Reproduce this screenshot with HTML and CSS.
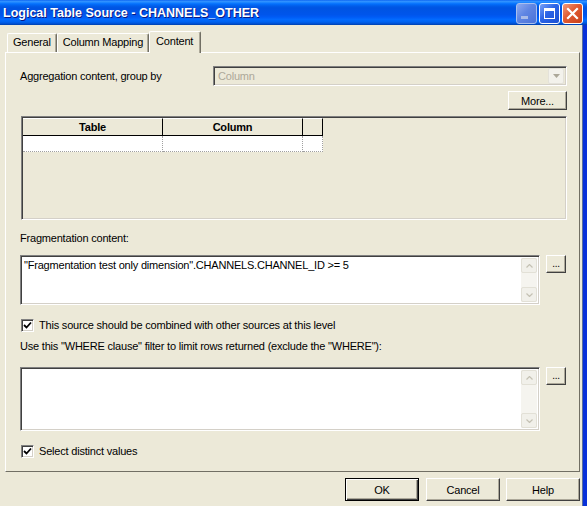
FILE: index.html
```html
<!DOCTYPE html>
<html lang="en">
<head>
    <meta charset="UTF-8">
    <meta name="viewport" content="width=device-width, initial-scale=1.0">
    <title>Logical Table Source - CHANNELS_OTHER</title>
    <link rel="stylesheet" href="styles.css">
</head>
<body>
    <div class="window">
        <div class="titlebar">
            <span class="title">Logical Table Source - CHANNELS_OTHER</span>
            <div class="caption-buttons">
                <span class="cap cap-min">
                    <svg width="19" height="19" viewBox="0 0 19 19"><rect x="4" y="12" width="7" height="3" fill="#a9bbe8"/></svg>
                </span>
                <span class="cap cap-max">
                    <svg width="19" height="19" viewBox="0 0 19 19"><rect x="4.5" y="4.5" width="10" height="10" fill="none" stroke="#fff" stroke-width="1"/><rect x="4" y="4" width="11" height="3" fill="#fff"/></svg>
                </span>
                <span class="cap cap-close">
                    <svg width="19" height="19" viewBox="0 0 19 19"><path d="M5 5 L14 14 M14 5 L5 14" stroke="#fff" stroke-width="2.2" stroke-linecap="square"/></svg>
                </span>
            </div>
        </div>
        <div class="client">
            <div class="tabs">
                <div class="tab">General</div>
                <div class="tab">Column Mapping</div>
                <div class="tab active">Content</div>
            </div>
            <div class="panel">
                <div class="agg-row">
                    <label class="agg-label">Aggregation content, group by</label>
                    <div class="combo">
                        <span class="combo-text">Column</span>
                        <span class="combo-arrow">
                            <svg width="9" height="5" viewBox="0 0 9 5"><path d="M1 0 L8 0 L4.5 4 Z" fill="#aca899"/></svg>
                        </span>
                    </div>
                </div>
                <div class="more-row"><button class="btn more-btn">More...</button></div>
                <div class="listbox">
                    <div class="grid-head">
                        <div class="gcell c1">Table</div>
                        <div class="gcell c2">Column</div>
                        <div class="gcell c3"></div>
                    </div>
                    <div class="grid-row">
                        <div class="rcell c1"></div>
                        <div class="rcell c2"></div>
                        <div class="rcell c3"></div>
                    </div>
                </div>

                <div class="field-label frag-label">Fragmentation content:</div>
                <div class="edit-row frag-row">
                    <div class="textbox">
                        <div class="textbox-text">"Fragmentation test only dimension".CHANNELS.CHANNEL_ID &gt;= 5</div>
                        <div class="vscroll">
                            <span class="sbtn"><svg width="7" height="4" viewBox="0 0 7 4"><path d="M0.5 3.5 L3.5 0.5 L6.5 3.5" fill="none" stroke="#c4c1b3" stroke-width="1.2"/></svg></span>
                            <span class="strack"></span>
                            <span class="sbtn"><svg width="7" height="4" viewBox="0 0 7 4"><path d="M0.5 0.5 L3.5 3.5 L6.5 0.5" fill="none" stroke="#c4c1b3" stroke-width="1.2"/></svg></span>
                        </div>
                    </div>
                    <button class="btn dots-btn">...</button>
                </div>

                <div class="check-row combine-row">
                    <span class="checkbox">
                        <svg width="9" height="9" viewBox="0 0 9 9"><path d="M1 4 L3.5 6.5 L8 1.5" fill="none" stroke="#000" stroke-width="1.8"/></svg>
                    </span>
                    <span>This source should be combined with other sources at this level</span>
                </div>

                <div class="field-label where-label">Use this "WHERE clause" filter to limit rows returned (exclude the "WHERE"):</div>
                <div class="edit-row where-row">
                    <div class="textbox">
                        <div class="textbox-text"></div>
                        <div class="vscroll">
                            <span class="sbtn"><svg width="7" height="4" viewBox="0 0 7 4"><path d="M0.5 3.5 L3.5 0.5 L6.5 3.5" fill="none" stroke="#c4c1b3" stroke-width="1.2"/></svg></span>
                            <span class="strack"></span>
                            <span class="sbtn"><svg width="7" height="4" viewBox="0 0 7 4"><path d="M0.5 0.5 L3.5 3.5 L6.5 0.5" fill="none" stroke="#c4c1b3" stroke-width="1.2"/></svg></span>
                        </div>
                    </div>
                    <button class="btn dots-btn">...</button>
                </div>

                <div class="check-row distinct-row">
                    <span class="checkbox">
                        <svg width="9" height="9" viewBox="0 0 9 9"><path d="M1 4 L3.5 6.5 L8 1.5" fill="none" stroke="#000" stroke-width="1.8"/></svg>
                    </span>
                    <span>Select distinct values</span>
                </div>
            </div>
            <div class="dialog-buttons">
                <button class="btn dlg-btn default">OK</button>
                <button class="btn dlg-btn">Cancel</button>
                <button class="btn dlg-btn">Help</button>
            </div>
        </div>
    </div>
</body>
</html>
```

FILE: styles.css
```css
* {
    margin: 0;
    padding: 0;
    box-sizing: border-box;
}
body {
    width: 587px;
    height: 506px;
    overflow: hidden;
    font-family: "Liberation Sans", Arial, sans-serif;
    font-size: 11px;
    letter-spacing: -0.2px;
    color: #000;
    background: #ece9d8;
}
.window {
    width: 587px;
    height: 506px;
    display: flex;
    flex-direction: column;
}

/* title bar */
.titlebar {
    height: 25px;
    flex: none;
    display: flex;
    align-items: center;
    justify-content: space-between;
    padding: 0 4px 0 3px;
    background: linear-gradient(to bottom, #0058ee 0%, #3593ff 4%, #288eff 8%, #127dff 12%, #036ffc 16%, #0262ee 22%, #0057e5 28%, #0054e3 34%, #0055eb 58%, #005bf5 68%, #026afe 78%, #0062ef 88%, #0052d6 94%, #0040ab 100%);
}
.title {
    color: #fff;
    font-size: 12.5px;
    font-weight: bold;
    letter-spacing: 0;
    text-shadow: 1px 1px 0 #0a1883;
}
.caption-buttons {
    display: flex;
    gap: 2px;
    padding-top: 1px;
}
.cap {
    width: 21px;
    height: 21px;
    border: 1px solid #fff;
    border-radius: 3px;
    display: flex;
    align-items: center;
    justify-content: center;
}
.cap-min {
    border-color: #a8bfee;
    background: linear-gradient(135deg, #8eaaf0 0%, #5f85e3 45%, #4a72d8 100%);
}
.cap-max {
    background: linear-gradient(135deg, #7aa2f7 0%, #2b64e6 45%, #1a4fd2 100%);
}
.cap-close {
    background: linear-gradient(135deg, #f09a7c 0%, #e05a31 45%, #c8401a 100%);
}

/* client area */
.client {
    flex: 1;
    display: flex;
    flex-direction: column;
    border-right: 4px solid #0831d9;
    box-shadow: inset -1px 0 0 #5a6f9e;
}
.tabs {
    display: flex;
    align-items: flex-end;
    height: 27px;
    padding-left: 7px;
    position: relative;
    z-index: 1;
}
.tab {
    height: 19px;
    line-height: 17px;
    padding: 0 5px 0 5px;
    border-top: 1px solid #fff;
    border-left: 1px solid #fff;
    border-right: 1px solid #716f64;
    box-shadow: inset -1px 0 0 #aca899;
    border-radius: 2px 2px 0 0;
}
.tab.active {
    height: 22px;
    line-height: 19px;
    padding: 0 7px 0 6px;
    margin-bottom: -1px;
    background: #ece9d8;
}
.panel {
    height: 420px;
    margin: 0 3px 0 5px;
    border: 1px solid;
    border-color: #fff #716f64 #716f64 #fff;
    padding: 13px 12px 0 14px;
    display: flex;
    flex-direction: column;
}

/* sunken controls */
.combo,
.listbox,
.textbox,
.checkbox {
    border: 1px solid;
    border-color: #808080 #fff #fff #808080;
    box-shadow: inset 1px 1px 0 #404040, inset -1px -1px 0 #d4d0c8;
}

.agg-row {
    display: flex;
    height: 20px;
    line-height: 20px;
}
.agg-label {
    width: 193px;
}
.combo {
    flex: 1;
    display: flex;
    align-items: center;
    justify-content: space-between;
    padding: 0 2px 0 4px;
    background: #ece9d8;
}
.combo-text {
    color: #aca899;
}
.combo-arrow {
    width: 16px;
    height: 16px;
    border: 1px solid #e4e2da;
    border-radius: 2px;
    background: #f3f2ec;
    display: flex;
    align-items: center;
    justify-content: center;
}

/* raised buttons */
.btn {
    font-family: inherit;
    font-size: 11px;
    letter-spacing: -0.2px;
    color: #000;
    background: #ece9d8;
    border: 1px solid;
    border-color: #fff #404040 #404040 #fff;
    box-shadow: inset -1px -1px 0 #aca899;
    cursor: pointer;
}
.more-row {
    display: flex;
    justify-content: flex-end;
    margin-top: 5px;
}
.more-btn {
    width: 59px;
    height: 19px;
}

.listbox {
    margin: 6px 0 0 1px;
    height: 104px;
    padding: 1px 0 0 1px;
    background: #ece9d8;
}
.grid-head,
.grid-row {
    display: flex;
}
.c1 { width: 140px; }
.c2 { width: 140px; }
.c3 { width: 20px; }
.gcell {
    height: 18px;
    line-height: 17px;
    text-align: center;
    font-weight: bold;
    border-top: 1px solid #fff;
    border-right: 1px solid #000;
    border-bottom: 1px solid #000;
}
.rcell {
    height: 16px;
    background: #fff;
    border-right: 1px dotted #a0a0a0;
    border-bottom: 1px dotted #a0a0a0;
}

.field-label {
    height: 14px;
    line-height: 14px;
}
.frag-label {
    margin-top: 11px;
}
.where-label {
    margin-top: 7px;
}
.edit-row {
    display: flex;
    gap: 6px;
    align-items: flex-start;
}
.frag-row {
    margin-top: 10px;
}
.frag-row .textbox {
    height: 50px;
}
.where-row {
    margin-top: 14px;
}
.where-row .textbox {
    height: 64px;
}
.textbox {
    width: 520px;
    display: flex;
    background: #fff;
    padding: 2px;
}
.textbox-text {
    flex: 1;
    padding: 1px 0 0 1px;
    line-height: 13px;
}
.vscroll {
    width: 16px;
    display: flex;
    flex-direction: column;
    background: #f5f4ef;
}
.strack {
    flex: 1;
}
.sbtn {
    height: 15px;
    border: 1px solid #e2e0d6;
    border-radius: 2px;
    background: #f1f0ea;
    display: flex;
    align-items: center;
    justify-content: center;
}
.dots-btn {
    width: 20px;
    height: 18px;
    line-height: 12px;
    font-size: 10px;
}

.check-row {
    display: flex;
    align-items: center;
    gap: 5px;
    height: 14px;
    padding-left: 1px;
}
.combine-row {
    margin-top: 13px;
}
.distinct-row {
    margin-top: 13px;
}
.checkbox {
    width: 13px;
    height: 13px;
    background: #fff;
    display: flex;
    align-items: center;
    justify-content: center;
}

.dialog-buttons {
    display: flex;
    justify-content: flex-end;
    gap: 6px;
    margin-top: 6px;
    padding-right: 3px;
}
.dlg-btn {
    width: 74px;
    height: 23px;
}
.dlg-btn.default {
    border: 1px solid #000;
    box-shadow: inset 1px 1px 0 #fff, inset -1px -1px 0 #404040, inset -2px -2px 0 #aca899;
    margin-right: 1px;
}
```
